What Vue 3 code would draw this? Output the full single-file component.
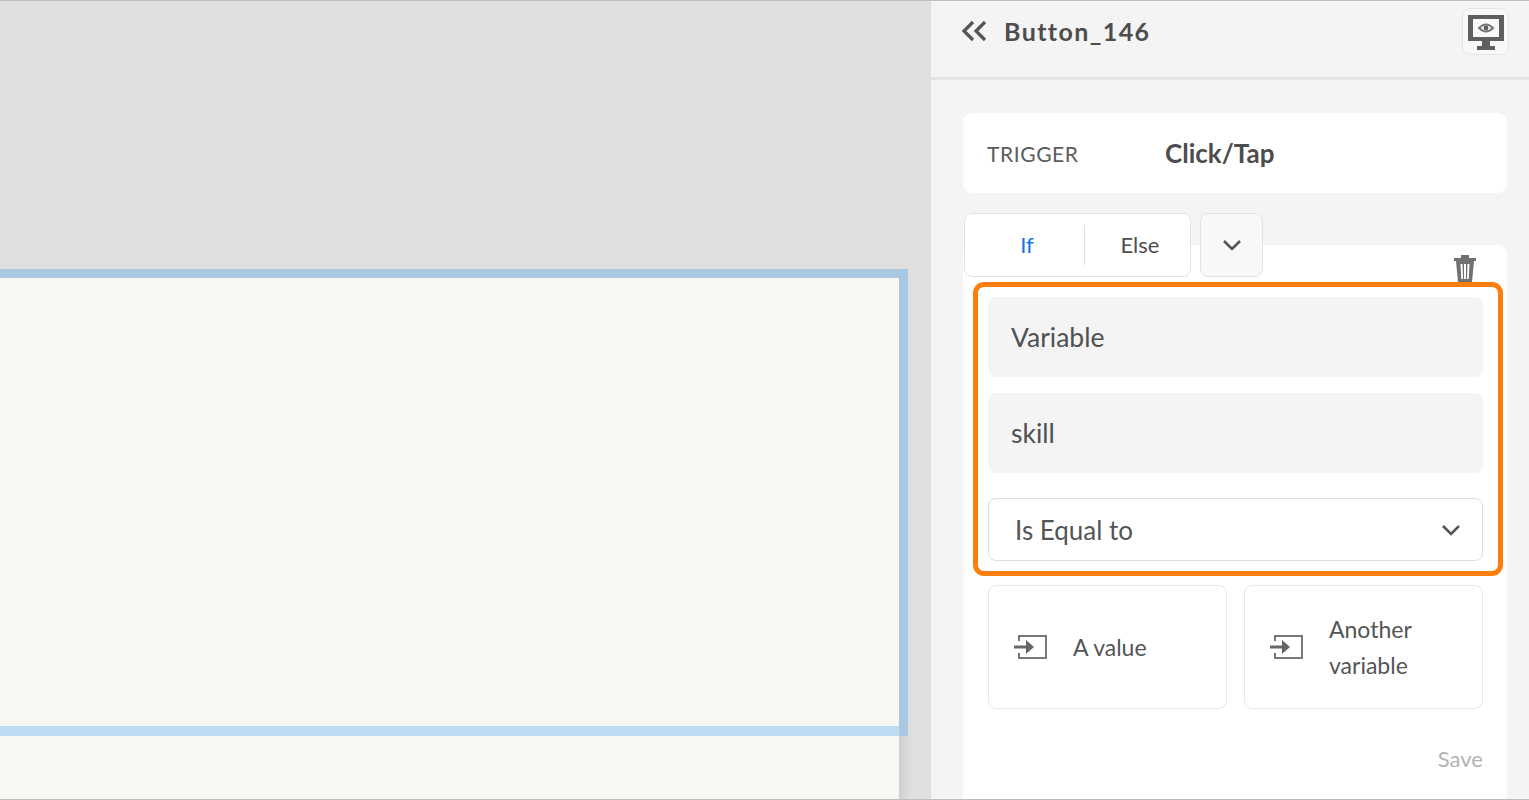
<script setup>
const tabs = ['If', 'Else']
const fields = ['Variable', 'skill']
const options = [
  { id: 'value', lines: ['A value'] },
  { id: 'variable', lines: ['Another', 'variable'] }
]
</script>

<template>
  <div class="app">
    <main class="canvas">
      <div class="sheet"></div>
      <div class="selection"></div>
    </main>
    <aside class="panel">
      <header class="head">
        <div class="title">
          <svg class="back" viewBox="0 0 26 22" width="26" height="22" fill="none" stroke="#555" stroke-width="3.200">
            <path d="M12 2 3 11l9 9" /><path d="M24 2l-9 9 9 9" />
          </svg>
          <span>Button_146</span>
        </div>
        <button class="preview">
          <svg viewBox="0 0 36 36" width="36" height="36">
            <path fill="#5f5f5f" fill-rule="evenodd" d="M0 1h36v26H0zM5 5v18h26V5z" />
            <path fill="#5f5f5f" d="M14 27h8v5h5v4H9v-4h5z" />
            <path fill="none" stroke="#777" stroke-width="2" d="M11 14q7-7 14 0q-7 7-14 0z" />
            <circle cx="18" cy="14" r="2.400" fill="#5f5f5f" />
          </svg>
        </button>
      </header>
      <div class="body">
        <section class="trigger">
          <span class="trigger-label">TRIGGER</span>
          <span class="trigger-value">Click/Tap</span>
        </section>
        <div class="tabrow">
          <div class="tabs">
            <span v-for="(t, i) in tabs" :key="t" class="tab" :class="{ active: i === 0 }">{{ t }}</span>
          </div>
          <button class="more">
            <svg viewBox="0 0 20 12" width="20" height="12" fill="none" stroke="#555" stroke-width="2.500"><path d="M2 2l8 8 8-8" /></svg>
          </button>
        </div>
        <section class="card">
          <div class="trash-row">
            <svg class="trash" viewBox="0 0 24 28" width="24" height="28">
              <path fill="#707070" d="M1 4h22v3H1zM8 1h8v3H8z" />
              <path fill="#707070" fill-rule="evenodd" d="M3 7h18l-2 21H5zM7.500 10l.8 15h1.700l-.5-15zM11 10v15h2V10zM14.500 10l-.5 15h1.700l.8-15z" />
            </svg>
          </div>
          <div class="highlight">
            <div v-for="f in fields" :key="f" class="field">{{ f }}</div>
            <div class="select">
              <span>Is Equal to</span>
              <svg viewBox="0 0 20 12" width="20" height="12" fill="none" stroke="#555" stroke-width="2.500"><path d="M2 2l8 8 8-8" /></svg>
            </div>
          </div>
          <div class="options">
            <div v-for="o in options" :key="o.id" class="option">
              <svg viewBox="0 0 34 26" width="34" height="26" fill="none">
                <path stroke="#777" stroke-width="2" d="M5 7V2h27v22H5v-5" />
                <path stroke="#666" stroke-width="3" d="M0 13h14" />
                <path fill="#666" d="M12 6l8 7-8 7z" />
              </svg>
              <div class="option-text">
                <div v-for="l in o.lines" :key="l">{{ l }}</div>
              </div>
            </div>
          </div>
          <div class="save">Save</div>
        </section>
      </div>
    </aside>
  </div>
</template>

<style>
html, body { margin: 0; overflow: hidden; }
</style>

<style scoped>
.app {
  display: flex;
  width: 1529px;
  height: 800px;
  overflow: hidden;
  box-sizing: border-box;
  border-top: 1px solid #bdbdbd;
  border-bottom: 1px solid #bdbdbd;
  font-family: "Lato", "Noto Sans", sans-serif;
  color: #505050;
}
.canvas {
  position: relative;
  width: 931px;
  flex: none;
  background: #e0e0e0;
  padding-top: 277px;
  box-sizing: border-box;
  overflow: hidden;
}
.sheet {
  width: 899px;
  height: 530px;
  background: #f8f7f3;
  box-shadow: 4px 0 12px rgba(0, 0, 0, 0.1);
}
.selection {
  position: absolute;
  top: 268px;
  left: -10px;
  width: 918px;
  height: 467px;
  box-sizing: border-box;
  border-top: 9px solid #a9c8e2;
  border-right: 9px solid #a9c8e2;
}
.selection::after {
  content: "";
  position: absolute;
  left: 0;
  right: 0;
  bottom: 0;
  height: 10px;
  background: #bddcf2;
}
.panel {
  flex: 1;
  display: flex;
  flex-direction: column;
  background: #f4f4f4;
}
.head {
  height: 79px;
  flex: none;
  box-sizing: border-box;
  border-bottom: 3px solid #e4e4e4;
  display: flex;
  justify-content: space-between;
  align-items: flex-start;
  padding: 7px 20px 0 30px;
}
.title {
  display: flex;
  align-items: center;
  gap: 17px;
  height: 47px;
  margin-top: -1px;
  font-weight: 700;
  font-size: 25px;
  letter-spacing: 1.400px;
  color: #4d4d4d;
}
.preview {
  width: 47px;
  height: 47px;
  padding: 0;
  background: #f8f8f8;
  border: 1px solid #e6e6e6;
  border-radius: 8px;
  display: flex;
  align-items: center;
  justify-content: center;
}
.body {
  flex: 1;
  padding: 33px 22px 0 32px;
  display: flex;
  flex-direction: column;
}
.trigger {
  height: 80px;
  flex: none;
  background: #fff;
  border-radius: 9px;
  display: flex;
  align-items: center;
  padding-left: 24px;
}
.trigger-label {
  width: 178px;
  font-size: 21px;
  letter-spacing: 0.600px;
  color: #5c5c5c;
}
.trigger-value {
  font-size: 26px;
  font-weight: 700;
  color: #4d4d4d;
}
.tabrow {
  position: relative;
  z-index: 1;
  display: flex;
  gap: 9px;
  margin-top: 20px;
  margin-bottom: -32px;
  margin-left: 1px;
  height: 64px;
  flex: none;
}
.tabs {
  width: 227px;
  box-sizing: border-box;
  background: #fff;
  border: 1px solid #e3e3e3;
  border-radius: 8px;
  display: flex;
  align-items: center;
}
.tab {
  flex: 1;
  box-sizing: border-box;
  padding-left: 5px;
  text-align: center;
  font-size: 22px;
  line-height: 40px;
  color: #4d4d4d;
}
.tab:first-child {
  flex: none;
  width: 120px;
  border-right: 1px solid #dedede;
}
.tab.active { color: #1473e6; }
.more {
  width: 63px;
  padding: 0;
  background: #f8f8f8;
  border: 1px solid #e3e3e3;
  border-radius: 8px;
  display: flex;
  align-items: center;
  justify-content: center;
}
.card {
  flex: 1;
  background: #fff;
  border-radius: 9px 9px 0 0;
  padding: 0 24px 0 25px;
  position: relative;
}
.trash-row {
  height: 37px;
  position: relative;
}
.trash {
  position: absolute;
  top: 9px;
  right: 6px;
}
.highlight {
  margin: 0 -20px 0 -15px;
  border: 5px solid #fb7e0c;
  border-radius: 11px;
  background: #fff;
  height: 294px;
  box-sizing: border-box;
  padding: 10px 15px 0 10px;
  position: relative;
  display: flex;
  flex-direction: column;
}
.field {
  height: 80px;
  flex: none;
  margin-bottom: 16px;
  background: #f4f4f4;
  border-radius: 8px;
  display: flex;
  align-items: center;
  padding-left: 23px;
  font-size: 26.500px;
  color: #505050;
}
.select {
  margin-top: 9px;
  height: 63px;
  flex: none;
  box-sizing: border-box;
  border: 1px solid #dedede;
  border-radius: 8px;
  display: flex;
  align-items: center;
  justify-content: space-between;
  padding: 0 21px 0 26px;
  font-size: 26px;
  color: #555;
}
.options {
  display: flex;
  gap: 17px;
  margin-top: 9px;
}
.option {
  flex: 1;
  height: 124px;
  box-sizing: border-box;
  border: 1px solid #e6e6e6;
  border-radius: 8px;
  display: flex;
  align-items: center;
  gap: 25px;
  padding-left: 25px;
}
.option-text {
  font-size: 23px;
  line-height: 36px;
  color: #555;
}
.save {
  text-align: right;
  margin-top: 36px;
  font-size: 22px;
  color: #b3b3b3;
}
</style>
